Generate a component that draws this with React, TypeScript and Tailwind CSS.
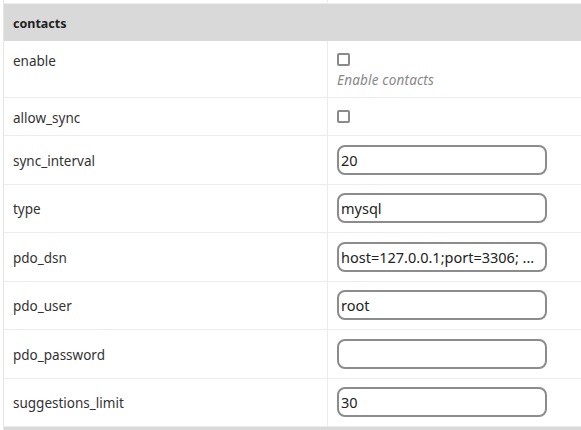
import React from 'react';

type Row =
  | { key: string; kind: 'check'; hint?: string }
  | { key: string; kind: 'text'; value: string };

const rows: Row[] = [
  { key: 'enable', kind: 'check', hint: 'Enable contacts' },
  { key: 'allow_sync', kind: 'check' },
  { key: 'sync_interval', kind: 'text', value: '20' },
  { key: 'type', kind: 'text', value: 'mysql' },
  { key: 'pdo_dsn', kind: 'text', value: 'host=127.0.0.1;port=3306; ...' },
  { key: 'pdo_user', kind: 'text', value: 'root' },
  { key: 'pdo_password', kind: 'text', value: '' },
  { key: 'suggestions_limit', kind: 'text', value: '30' },
];

function Checkbox() {
  return <span className="block w-[13px] h-[13px] border-2 border-[#8a8a8a] rounded-[2px] bg-white" />;
}

export default function App() {
  return (
    <div className="w-[581px] h-[430px] overflow-hidden bg-white text-[13.5px] text-[#333]" style={{ fontFamily: '"Noto Sans", sans-serif' }}>
      <div className="ml-[3px] border-l border-[#e6e6e6]">
        {/* tail of previous section */}
        <div className="flex h-[4px] border-b border-[#ececec]">
          <div className="w-[324px] border-r border-[#ececec]" />
          <div className="flex-1" />
        </div>

        {/* section header */}
        <div className="h-[37px] bg-[#d9d9d9] flex items-center pl-[9px] pt-[3px] font-bold text-[12.5px] text-[#222]">
          contacts
        </div>

        {rows.map((r) => (
          <div key={r.key} className="flex border-b border-[#ececec]">
            <div
              className={`w-[324px] shrink-0 border-r border-[#ececec] px-[9px] flex ${
                r.kind === 'check' && r.hint ? 'items-start pt-[11px]' : 'items-center pt-[2px]'
              }`}
            >
              <span className="leading-[18px]">{r.key}</span>
            </div>
            <div className="flex-1 px-[9px]">
              {r.kind === 'check' ? (
                <div className={r.hint ? 'pt-[12px] pb-[9px]' : 'py-[12px]'}>
                  <Checkbox />
                  {r.hint && (
                    <div className="mt-[6px] italic text-[#888] leading-[16px] tracking-[0.2px]">{r.hint}</div>
                  )}
                </div>
              ) : (
                <div className="py-[8.75px]">
                  <input
                    readOnly
                    value={r.value}
                    className="block w-[210px] h-[30px] border-2 border-[#8c8c8c] rounded-[8px] px-[2px] text-[14.5px] text-[#222] bg-white outline-none"
                    style={{ fontFamily: '"Noto Sans", sans-serif' }}
                  />
                </div>
              )}
            </div>
          </div>
        ))}

        <div className="h-[10px] bg-[#d9d9d9]" />
      </div>
    </div>
  );
}
